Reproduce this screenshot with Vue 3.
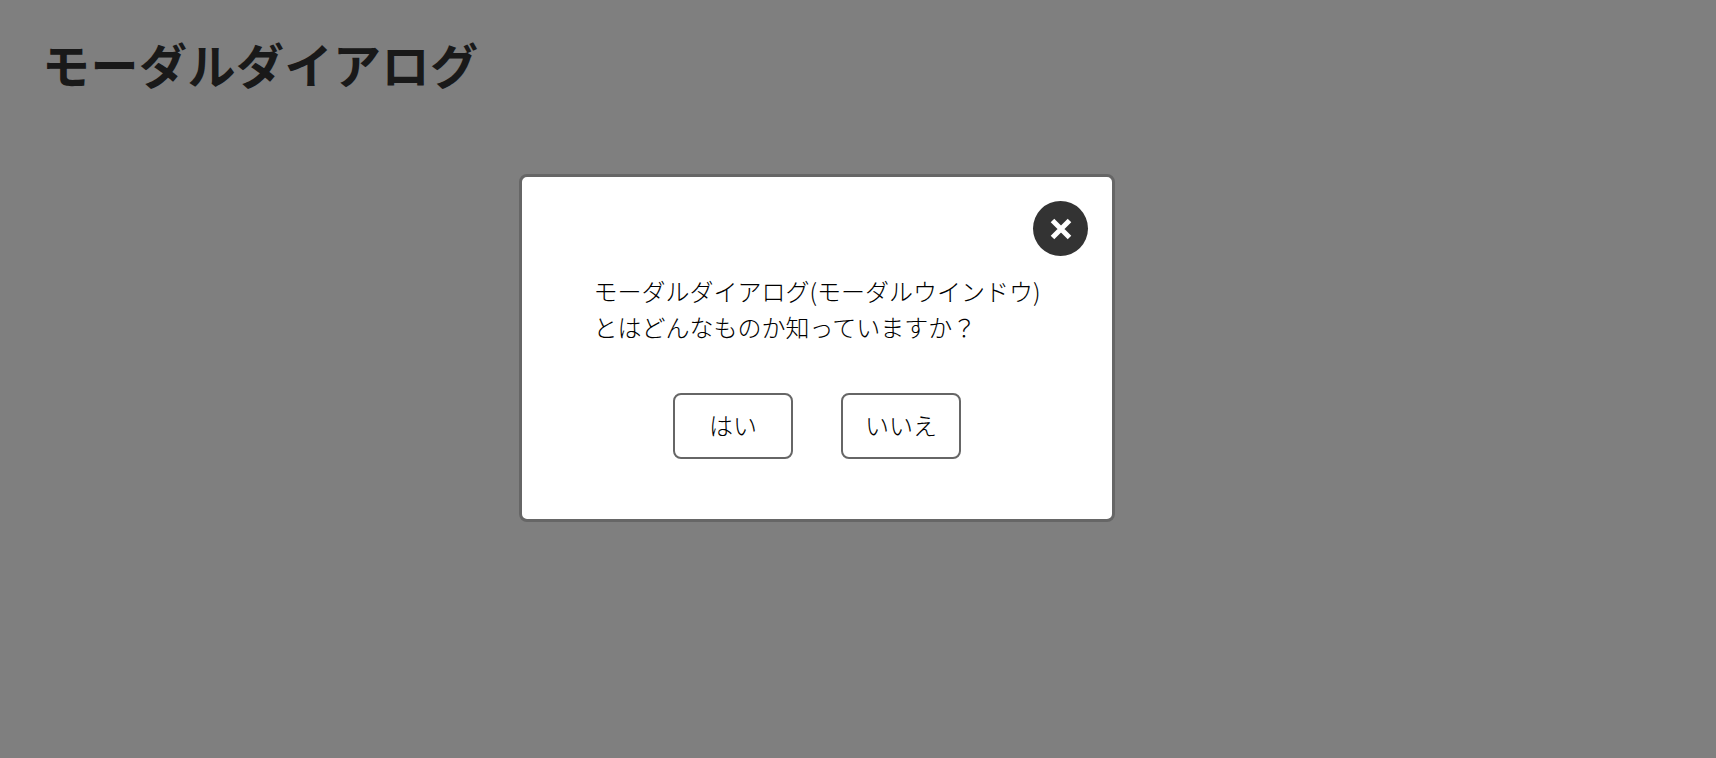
<template>
  <div class="page">
    <h1 class="page-title">モーダルダイアログ</h1>

    <div class="overlay">
      <div class="modal">
        <button class="close-button" type="button" aria-label="閉じる">
          <svg width="24" height="24" viewBox="0 0 24 24">
            <path d="M3.5 3.5 L20.5 20.5 M20.5 3.5 L3.5 20.5" stroke="#fff" stroke-width="5" fill="none" />
          </svg>
        </button>
        <p class="message">
          モーダルダイアログ(モーダルウインドウ)<br />とはどんなものか知っていますか？
        </p>
        <div class="actions">
          <button class="answer-button" type="button">はい</button>
          <button class="answer-button" type="button">いいえ</button>
        </div>
      </div>
    </div>
  </div>
</template>

<script setup>
</script>

<style>
html,
body {
  margin: 0;
  background: #fff;
}
</style>

<style scoped>
.page {
  min-height: 758px;
  font-family: "Noto Sans CJK JP", "Noto Sans", sans-serif;
  color: #333;
}

.page-title {
  margin: 0;
  padding: 32px 42px 0;
  font-size: 48px;
  line-height: 62px;
  font-weight: 700;
  letter-spacing: 0.5px;
}

.overlay {
  position: fixed;
  inset: 0;
  background: rgba(0, 0, 0, 0.5);
  padding: 174px 0 0 519px;
  box-sizing: border-box;
}

.modal {
  width: 596px;
  height: 348px;
  box-sizing: border-box;
  padding: 24px 24px 0;
  background: #fff;
  border: 3px solid #666;
  border-radius: 8px;
  display: flex;
  flex-direction: column;
}

.close-button {
  align-self: flex-end;
  width: 55px;
  height: 55px;
  padding: 0;
  border: none;
  border-radius: 50%;
  background: #333;
  display: flex;
  align-items: center;
  justify-content: center;
}

.message {
  margin: 17px auto 0;
  font-size: 24px;
  line-height: 36px;
  font-weight: 300;
  color: #000;
}

.actions {
  margin-top: 48px;
  display: flex;
  justify-content: center;
  gap: 48px;
}

.answer-button {
  width: 120px;
  height: 66px;
  padding: 0 0 4px;
  background: #fff;
  border: 2px solid #666;
  border-radius: 8px;
  font-family: inherit;
  font-size: 24px;
  font-weight: 300;
  color: #000;
}
</style>
